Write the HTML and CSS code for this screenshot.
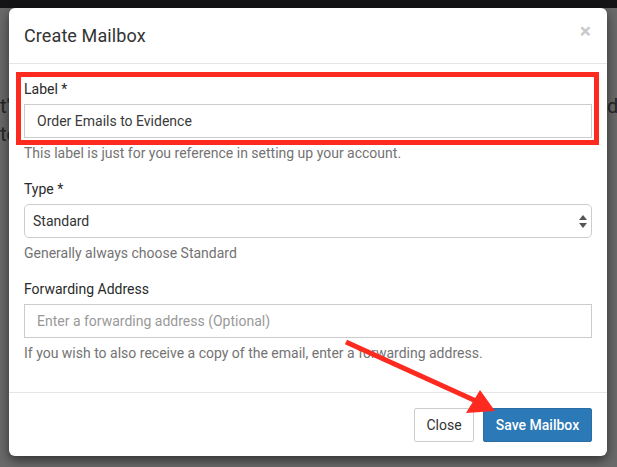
FILE: index.html
```html
<!DOCTYPE html>
<html>
<head>
<meta charset="utf-8">
<link rel="stylesheet" href="styles.css">
</head>
<body>
<div class="topbar"></div>
<div class="bgtext bg-left1">t'</div>
<div class="bgtext bg-left2">tc</div>
<div class="bgtext bg-right">d</div>
<div class="modal">
  <div class="modal-header">
    <h4 class="modal-title">Create Mailbox</h4>
    <span class="close">×</span>
  </div>
  <div class="modal-body">
    <div class="form-group">
      <label class="label">Label *</label>
      <input class="control" type="text" value="Order Emails to Evidence">
      <p class="help">This label is just for you reference in setting up your account.</p>
    </div>
    <div class="form-group">
      <label class="label">Type *</label>
      <div class="select">
        <span>Standard</span>
        <svg class="caret" width="8" height="13" viewBox="0 0 8 13"><polygon points="4,0 8,5 0,5" fill="#555"/><polygon points="0,8 8,8 4,13" fill="#555"/></svg>
      </div>
      <p class="help">Generally always choose Standard</p>
    </div>
    <div class="form-group">
      <label class="label">Forwarding Address</label>
      <input class="control" type="text" placeholder="Enter a forwarding address (Optional)">
      <p class="help">If you wish to also receive a copy of the email, enter a forwarding address.</p>
    </div>
  </div>
  <div class="modal-footer">
    <button class="btn btn-default">Close</button>
    <button class="btn btn-primary">Save Mailbox</button>
  </div>
</div>
<svg class="annotations" width="617" height="467" viewBox="0 0 617 467">
  <rect x="18.5" y="74.5" width="578" height="68" fill="none" stroke="#fd2a1f" stroke-width="5"/>
  <line x1="346" y1="342" x2="476" y2="401" stroke="#fd2a1f" stroke-width="5"/>
  <polygon points="495,411 480,390 466,413" fill="#fd2a1f"/>
</svg>
</body>
</html>
```
FILE: styles.css
```css
html, body {
  margin: 0;
  padding: 0;
}
body {
  width: 617px;
  height: 467px;
  overflow: hidden;
  background: #6a6a6a;
  font-family: Roboto, "Liberation Sans", sans-serif;
  font-size: 14px;
  color: #333;
  position: relative;
}
.topbar {
  height: 8px;
  background: #141416;
}
.bgtext {
  position: absolute;
  font-size: 20px;
  color: #262626;
  line-height: 20px;
}
.bg-left1 { left: 0; top: 96px; }
.bg-left2 { left: 0; top: 124px; }
.bg-right { left: 607px; top: 96px; }
.modal {
  position: relative;
  margin-left: 9px;
  width: 598px;
  height: 448px;
  background: #fff;
  border-radius: 6px;
  box-shadow: 0 4px 12px rgba(0,0,0,0.55);
  display: flex;
  flex-direction: column;
}
.modal-header {
  height: 55px;
  flex: none;
  border-bottom: 1px solid #e5e5e5;
  display: flex;
  align-items: center;
  justify-content: space-between;
  padding: 0 15px;
}
.modal-title {
  margin: 0;
  font-size: 18px;
  font-weight: 400;
  color: #333;
  letter-spacing: 0.1px;
  padding-bottom: 1px;
}
.close {
  font-size: 21px;
  font-weight: 700;
  color: #c9c9c9;
  line-height: 1;
  margin-top: -8px;
  margin-right: 1px;
}
.modal-body {
  padding: 15px 15px 13px;
}
.form-group {
  margin-bottom: 16px;
}
.label {
  display: block;
  line-height: 20px;
  font-weight: 400;
  color: #2a2a2a;
  margin-bottom: 5px;
}
.control {
  box-sizing: border-box;
  display: block;
  width: 568px;
  height: 34px;
  margin: 0;
  padding: 0 12px;
  border: 1px solid #ccc;
  border-radius: 0;
  font-family: inherit;
  font-size: 14px;
  color: #3a3a3a;
  background: #fff;
  outline: none;
}
.control::placeholder {
  color: #999;
}
.select {
  box-sizing: border-box;
  width: 568px;
  height: 34px;
  border: 1px solid #ccc;
  border-radius: 5px;
  display: flex;
  align-items: center;
  justify-content: space-between;
  padding: 0 4px 0 8px;
  color: #333;
}
.caret {
  display: block;
}
.help {
  margin: 5px 0 0;
  line-height: 20px;
  color: #737373;
}
.modal-footer {
  flex: none;
  border-top: 1px solid #e5e5e5;
  padding: 15px;
  display: flex;
  justify-content: flex-end;
  gap: 9px;
}
.btn {
  height: 34px;
  padding: 0 10px;
  font-family: inherit;
  font-size: 14px;
  white-space: nowrap;
  border-radius: 2px;
  border: 1px solid #ccc;
  cursor: pointer;
}
.btn-default {
  background: #fff;
  color: #333;
  width: 60px;
}
.btn-primary {
  background: #2b79b6;
  border-color: #2a6ea5;
  color: #fff;
  font-weight: 500;
  width: 109px;
}
.annotations {
  position: absolute;
  left: 0;
  top: 0;
  pointer-events: none;
}
```
